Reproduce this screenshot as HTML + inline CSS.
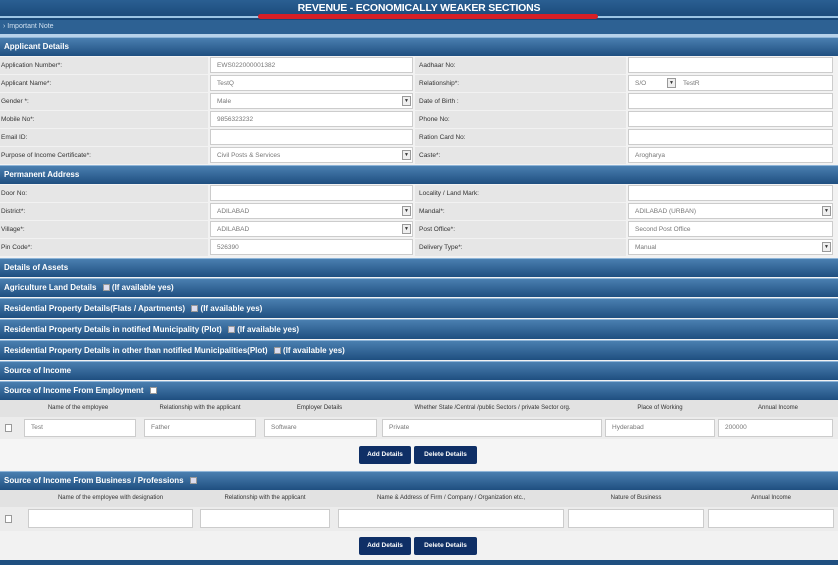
<!DOCTYPE html>
<html><head><meta charset="utf-8"><style>
*{box-sizing:border-box;margin:0;padding:0}
body{width:838px;height:565px;overflow:hidden;background:#f2f2f2;font-family:"Liberation Sans",sans-serif;font-size:7px;color:#333;position:relative}
.a{position:absolute}
.bar{position:absolute;left:0;width:838px;background:linear-gradient(#4a7fb0,#1f4f80);color:#fff;font-weight:bold;font-size:8px;padding-left:4px;border-top:1px solid #8fb5d8}
.lab{position:absolute;background:#e6e6e6;height:17px;line-height:17px;padding-left:1px;font-size:6.5px;color:#333}
.inp{position:absolute;background:#fff;border:1px solid #ccc;height:16px;line-height:16px;padding-left:6px;font-size:6.5px;color:#777}
.dd{position:absolute;right:1px;top:2px;width:9px;height:10px;border:1px solid #999;background:#eee;font-size:5px;line-height:8px;text-align:center;color:#333}
.btn{position:absolute;background:#0f2f66;color:#fff;font-weight:bold;font-size:6.5px;height:18px;line-height:18px;text-align:center;border-radius:2px}
.th{position:absolute;font-size:6px;text-align:center;color:#333}
.cb{display:inline-block;width:7px;height:7px;background:#dde;border:1px solid #999;vertical-align:middle;margin-left:4px}
</style></head><body>
<div class="a" style="left:0;top:0;width:838px;height:20px;background:linear-gradient(#2a5f92,#184676)"></div>
<div class="a" style="left:0;top:16px;width:838px;height:2px;background:#9cc4e4"></div>
<div class="a" style="left:258px;top:14px;width:340px;height:5px;background:#d61f26;border-radius:3px"></div>
<div class="a" style="left:0;top:2px;width:838px;text-align:center;color:#fff;font-weight:bold;font-size:10.5px;letter-spacing:-0.2px">REVENUE - ECONOMICALLY WEAKER SECTIONS</div>
<div class="a" style="left:0;top:20px;width:838px;height:14px;background:#2d6193;color:#cfe0f0;font-size:7px;line-height:14px;padding-left:3px">› Important Note</div>
<div class="a" style="left:0;top:34px;width:838px;height:3px;background:#b7d2ea"></div>
<div class="bar" style="top:37px;height:19px;line-height:18px">Applicant Details</div>

<div class="lab" style="left:0;top:57px;width:208px">Application Number*:</div><div class="inp" style="left:210px;top:57px;width:203px">EWS022000001382</div>
<div class="lab" style="left:415px;top:57px;width:211px;padding-left:4px">Aadhaar No:</div><div class="inp" style="left:628px;top:57px;width:205px"></div>
<div class="lab" style="left:0;top:75px;width:208px">Applicant Name*:</div><div class="inp" style="left:210px;top:75px;width:203px">TestQ</div>
<div class="lab" style="left:415px;top:75px;width:211px;padding-left:4px">Relationship*:</div><div class="inp" style="left:628px;top:75px;width:205px">S/O<span class="dd" style="left:38px;right:auto">▼</span><span class="a" style="left:54px;top:0">TestR</span></div>
<div class="lab" style="left:0;top:93px;width:208px">Gender *:</div><div class="inp" style="left:210px;top:93px;width:203px">Male<span class="dd">▼</span></div>
<div class="lab" style="left:415px;top:93px;width:211px;padding-left:4px">Date of Birth :</div><div class="inp" style="left:628px;top:93px;width:205px"></div>
<div class="lab" style="left:0;top:111px;width:208px">Mobile No*:</div><div class="inp" style="left:210px;top:111px;width:203px">9856323232</div>
<div class="lab" style="left:415px;top:111px;width:211px;padding-left:4px">Phone No:</div><div class="inp" style="left:628px;top:111px;width:205px"></div>
<div class="lab" style="left:0;top:129px;width:208px">Email ID:</div><div class="inp" style="left:210px;top:129px;width:203px"></div>
<div class="lab" style="left:415px;top:129px;width:211px;padding-left:4px">Ration Card No:</div><div class="inp" style="left:628px;top:129px;width:205px"></div>
<div class="lab" style="left:0;top:147px;width:208px">Purpose of Income Certificate*:</div><div class="inp" style="left:210px;top:147px;width:203px">Civil Posts &amp; Services<span class="dd">▼</span></div>
<div class="lab" style="left:415px;top:147px;width:211px;padding-left:4px">Caste*:</div><div class="inp" style="left:628px;top:147px;width:205px">Arogharya</div>

<div class="bar" style="top:165px;height:19px;line-height:18px">Permanent Address</div>
<div class="lab" style="left:0;top:185px;width:208px">Door No:</div><div class="inp" style="left:210px;top:185px;width:203px"></div>
<div class="lab" style="left:415px;top:185px;width:211px;padding-left:4px">Locality / Land Mark:</div><div class="inp" style="left:628px;top:185px;width:205px"></div>
<div class="lab" style="left:0;top:203px;width:208px">District*:</div><div class="inp" style="left:210px;top:203px;width:203px">ADILABAD<span class="dd">▼</span></div>
<div class="lab" style="left:415px;top:203px;width:211px;padding-left:4px">Mandal*:</div><div class="inp" style="left:628px;top:203px;width:205px">ADILABAD (URBAN)<span class="dd">▼</span></div>
<div class="lab" style="left:0;top:221px;width:208px">Village*:</div><div class="inp" style="left:210px;top:221px;width:203px">ADILABAD<span class="dd">▼</span></div>
<div class="lab" style="left:415px;top:221px;width:211px;padding-left:4px">Post Office*:</div><div class="inp" style="left:628px;top:221px;width:205px">Second Post Office</div>
<div class="lab" style="left:0;top:239px;width:208px">Pin Code*:</div><div class="inp" style="left:210px;top:239px;width:203px">526390</div>
<div class="lab" style="left:415px;top:239px;width:211px;padding-left:4px">Delivery Type*:</div><div class="inp" style="left:628px;top:239px;width:205px">Manual<span class="dd">▼</span></div>

<div class="bar" style="top:258px;height:19px;line-height:18px">Details of Assets</div>
<div class="bar" style="top:278px;height:19px;line-height:18px">Agriculture Land Details <span class="cb"></span> (If available yes)</div>
<div class="bar" style="top:298px;height:20px;line-height:19px">Residential Property Details(Flats / Apartments) <span class="cb"></span> (If available yes)</div>
<div class="bar" style="top:319px;height:20px;line-height:19px">Residential Property Details in notified Municipality (Plot) <span class="cb"></span> (If available yes)</div>
<div class="bar" style="top:340px;height:20px;line-height:19px">Residential Property Details in other than notified Municipalities(Plot) <span class="cb"></span> (If available yes)</div>
<div class="bar" style="top:361px;height:19px;line-height:18px">Source of Income</div>
<div class="bar" style="top:381px;height:19px;line-height:18px">Source of Income From Employment <span class="cb" style="background:#fff"></span></div>

<div class="a" style="left:0;top:400px;width:838px;height:17px;background:#e2e2e2"></div>
<div class="th" style="left:18px;top:405px;width:120px">Name of the employee</div>
<div class="th" style="left:140px;top:405px;width:120px">Relationship with the applicant</div>
<div class="th" style="left:262px;top:405px;width:115px">Employer Details</div>
<div class="th" style="left:380px;top:405px;width:225px">Whether State /Central /public Sectors / private Sector org.</div>
<div class="th" style="left:605px;top:405px;width:110px">Place of Working</div>
<div class="th" style="left:718px;top:405px;width:120px">Annual Income</div>
<div class="a" style="left:0;top:417px;width:838px;height:22px;background:#ececec"></div>
<div class="a" style="left:5px;top:424px;width:7px;height:8px;border:1px solid #999;background:#fff"></div>
<div class="inp" style="left:24px;top:419px;width:112px;height:18px;line-height:16px">Test</div>
<div class="inp" style="left:144px;top:419px;width:112px;height:18px;line-height:16px">Father</div>
<div class="inp" style="left:264px;top:419px;width:113px;height:18px;line-height:16px">Software</div>
<div class="inp" style="left:382px;top:419px;width:220px;height:18px;line-height:16px">Private</div>
<div class="inp" style="left:605px;top:419px;width:110px;height:18px;line-height:16px">Hyderabad</div>
<div class="inp" style="left:718px;top:419px;width:115px;height:18px;line-height:16px">200000</div>
<div class="a" style="left:0;top:439px;width:838px;height:31px;background:#f5f5f5"></div>
<div class="btn" style="left:359px;top:446px;width:52px">Add Details</div>
<div class="btn" style="left:414px;top:446px;width:63px">Delete Details</div>

<div class="bar" style="top:471px;height:19px;line-height:18px">Source of Income From Business / Professions <span class="cb"></span></div>
<div class="a" style="left:0;top:490px;width:838px;height:17px;background:#e2e2e2"></div>
<div class="th" style="left:28px;top:495px;width:165px">Name of the employee with designation</div>
<div class="th" style="left:200px;top:495px;width:130px">Relationship with the applicant</div>
<div class="th" style="left:338px;top:495px;width:226px">Name &amp; Address of Firm / Company / Organization etc.,</div>
<div class="th" style="left:568px;top:495px;width:136px">Nature of Business</div>
<div class="th" style="left:708px;top:495px;width:126px">Annual Income</div>
<div class="a" style="left:0;top:507px;width:838px;height:24px;background:#ececec"></div>
<div class="a" style="left:5px;top:515px;width:7px;height:8px;border:1px solid #999;background:#fff"></div>
<div class="inp" style="left:28px;top:509px;width:165px;height:19px"></div>
<div class="inp" style="left:200px;top:509px;width:130px;height:19px"></div>
<div class="inp" style="left:338px;top:509px;width:226px;height:19px"></div>
<div class="inp" style="left:568px;top:509px;width:136px;height:19px"></div>
<div class="inp" style="left:708px;top:509px;width:126px;height:19px"></div>
<div class="btn" style="left:359px;top:537px;width:52px">Add Details</div>
<div class="btn" style="left:414px;top:537px;width:63px">Delete Details</div>
<div class="a" style="left:0;top:560px;width:838px;height:5px;background:#1f4f80"></div>
</body></html>
